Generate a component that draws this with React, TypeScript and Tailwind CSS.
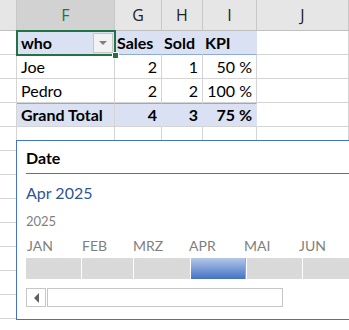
const cols = [
  { key: "rh", w: "w-[17px]", label: "" },
  { key: "F", w: "w-[98px]", label: "F" },
  { key: "G", w: "w-[47px]", label: "G" },
  { key: "H", w: "w-[41px]", label: "H" },
  { key: "I", w: "w-[54px]", label: "I" },
  { key: "J", w: "w-[92px]", label: "J" },
];

const rows = [
  { who: "who", g: "Sales", h: "Sold", i: "KPI", kind: "head" },
  { who: "Joe", g: "2", h: "1", i: "50 %", kind: "data" },
  { who: "Pedro", g: "2", h: "2", i: "100 %", kind: "data" },
  { who: "Grand Total", g: "4", h: "3", i: "75 %", kind: "total" },
];

const months = [
  { m: "JAN", w: "w-[55px]" },
  { m: "FEB", w: "w-[51px]" },
  { m: "MRZ", w: "w-[56px]" },
  { m: "APR", w: "w-[55px]", on: true },
  { m: "MAI", w: "w-[55px]" },
  { m: "JUN", w: "w-[55px]" },
];

function Slicer() {
  return (
    <div className="absolute left-[16px] top-[140px] w-[360px] h-[180px] bg-white border border-[#4472c4] pl-[9px] font-['Lato',sans-serif]">
      <div className="h-[33px] border-b border-[#4472c4] pt-[7px] text-[16px] font-bold text-black leading-[20px]">
        Date
      </div>
      <div className="pt-[9px] text-[16px] leading-[20px] text-[#2f5597]">Apr 2025</div>
      <div className="pt-[10px] text-[13px] leading-[16px] text-[#7f7f7f]">2025</div>
      <div className="flex pt-[9px]">
        {months.map((x) => (
          <div key={x.m} className={`${x.w} pl-[1px] text-[14px] leading-[16px] text-[#7f7f7f]`}>
            {x.m}
          </div>
        ))}
      </div>
      <div className="flex gap-[1px] mt-[4px] h-[21px]">
        {months.map((x) =>
          x.on ? (
            <div
              key={x.m}
              className={`${x.w} bg-gradient-to-b from-[#b4c7e7] to-[#4472c4] border-r border-[#8faadc]`}
            />
          ) : (
            <div key={x.m} className={`${x.w} bg-[#d9d9d9]`} />
          )
        )}
      </div>
      <div className="flex mt-[9px] h-[19px] w-[257px]">
        <div className="w-[20px] h-full border border-[#c6c6c6] flex items-center justify-center">
          <span className="block w-0 h-0 border-y-[5px] border-y-transparent border-r-[5px] border-r-[#606060]" />
        </div>
        <div className="flex-1 h-full border border-[#c6c6c6] ml-[1px]" />
      </div>
    </div>
  );
}

export default function App() {
  const gridRows = Array.from({ length: 12 }, (_, i) => i);
  return (
    <div className="relative w-[349px] h-[330px] overflow-hidden bg-white font-['Lato',sans-serif]">
      {/* column headers */}
      <div className="flex h-[31px] bg-[#e6e6e6] border-b border-[#bfbfbf]">
        {cols.map((c) => (
          <div
            key={c.key}
            className={`${c.w} shrink-0 border-r border-[#c8c8c8] flex items-end justify-center pb-[3px] text-[16px] font-['Open_Sans',sans-serif] ${
              c.key === "F" ? "bg-[#d2d2d2] text-[#217346]" : "text-[#222]"
            }`}
          >
            {c.label}
          </div>
        ))}
      </div>

      {/* grid */}
      {gridRows.map((r) => {
        const d = rows[r];
        const tint = d && d.kind !== "data";
        const bold = d && d.kind !== "data";
        return (
          <div
            key={r}
            className={`flex h-[24px] text-[16px] leading-[23px] text-black ${bold ? "font-bold" : ""}`}
          >
            <div className="w-[17px] shrink-0 border-r border-b border-[#d4d4d4]" />
            <div
              className={`w-[98px] shrink-0 pl-[4px] border-r border-b whitespace-nowrap ${
                tint ? "bg-[#d9e1f2]" : ""
              } ${d?.kind === "head" ? "border-b-[#8ea9db] border-r-transparent" : "border-[#d4d4d4]"} ${
                d?.kind === "total" ? "border-t border-t-[#8ea9db] leading-[22px]" : ""
              }`}
            >
              {d?.who}
            </div>
            {(["g", "h", "i"] as const).map((k, idx) => (
              <div
                key={k}
                className={`${["w-[47px]", "w-[41px]", "w-[54px]"][idx]} shrink-0 px-[4px] border-b whitespace-nowrap ${
                  tint ? "bg-[#d9e1f2] border-r border-r-[#d9e1f2]" : "border-r border-r-[#d4d4d4]"
                } ${d?.kind === "head" ? "text-left border-b-[#8ea9db] pl-[2px]" : "text-right border-b-[#d4d4d4]"} ${
                  d?.kind === "total" ? "border-t border-t-[#8ea9db] leading-[22px]" : ""
                }`}
              >
                {d ? d[k] : ""}
              </div>
            ))}
            <div className="w-[92px] shrink-0 border-r border-b border-[#d4d4d4]" />
          </div>
        );
      })}

      {/* selected cell F1 */}
      <div className="absolute left-[16px] top-[30px] w-[100px] h-[26px] border-2 border-[#217346] pointer-events-none" />
      <div className="absolute left-[112px] top-[52px] w-[7px] h-[7px] bg-[#217346] border border-white" />
      <div className="absolute left-[93px] top-[33px] w-[20px] h-[20px] bg-[#f2f2f2] border border-[#c6c6c6] flex items-center justify-center">
        <span className="block w-0 h-0 border-x-[4px] border-x-transparent border-t-[4px] border-t-[#808080]" />
      </div>

      <Slicer />
    </div>
  );
}
